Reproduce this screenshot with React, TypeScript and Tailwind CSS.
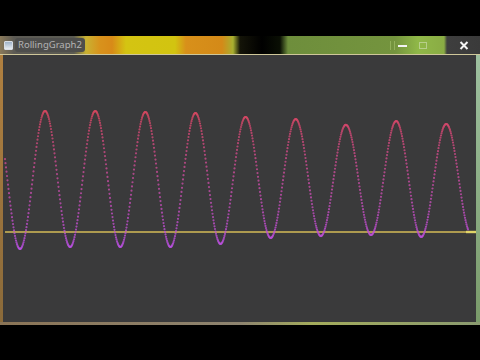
import { useMemo } from "react";

// envelope of the wave, read off the reference (page coordinates)
const tops: [number, number][] = [
  [45, 111], [96, 111], [145, 112], [195, 113], [246, 117],
  [295, 119], [347, 125], [397, 121], [446, 124],
];
const bottoms: [number, number][] = [
  [20, 249], [70, 247], [120, 247], [171, 247], [220, 244],
  [270, 238], [322, 236], [372, 235], [422, 237], [471, 234],
];

const OX = 3;
const OY = 55;

function lerpTable(t: [number, number][], x: number) {
  if (x <= t[0][0]) return t[0][1];
  for (let i = 1; i < t.length; i++) {
    if (x <= t[i][0]) {
      const [x0, y0] = t[i - 1];
      const [x1, y1] = t[i];
      return y0 + ((y1 - y0) * (x - x0)) / (x1 - x0);
    }
  }
  return t[t.length - 1][1];
}

function mix(a: number[], b: number[], k: number) {
  const c = a.map((v, i) => Math.round(v + (b[i] - v) * k));
  return `rgb(${c[0]},${c[1]},${c[2]})`;
}

function Wave() {
  const dots = useMemo(() => {
    const out: { x: number; y: number; c: string }[] = [];
    for (let x = 5; x <= 468; x += 0.5) {
      const top = lerpTable(tops, x);
      const bot = lerpTable(bottoms, x);
      const mid = (top + bot) / 2;
      const amp = (bot - top) / 2;
      const y = mid + amp * Math.cos((2 * Math.PI * (x - 20)) / 50.15);
      const k = Math.min(1, Math.max(0, (y - 111) / 138));
      out.push({ x: x - OX, y: y - OY, c: mix([214, 72, 96], [184, 80, 226], k) });
    }
    return out;
  }, []);

  return (
    <svg width="473" height="267" viewBox="0 0 473 267" className="block">
      <defs>
        <filter id="soft" x="-5%" y="-5%" width="110%" height="110%">
          <feGaussianBlur stdDeviation="0.35" />
        </filter>
      </defs>
      <g filter="url(#soft)">
        <line x1={2} y1={177} x2={466} y2={177} stroke="#ad9a50" strokeWidth={2} />
        <line x1={463} y1={177} x2={473} y2={177} stroke="#e0d466" strokeWidth={2.4} />
        {dots.map((d, i) => (
          <circle key={i} cx={d.x} cy={d.y} r={1.1} fill={d.c} opacity={0.8} />
        ))}
      </g>
    </svg>
  );
}

function TitleBar() {
  return (
    <div className="relative flex h-[19px] items-center border-b border-[#cfc79a] bg-[linear-gradient(90deg,#8a7a5a_0px,#5c5a54_14px,#5a5a52_74px,#c9b232_86px,#d8921c_100px,#d88a18_112px,#d4c412_126px,#d2c410_175px,#d8901a_186px,#d48a18_222px,#a8b030_233px,#141408_240px,#000_262px,#0a0f04_280px,#6e8e3c_288px,#74943e_395px,#90b848_418px,#8aac44_444px,#3e3e3e_447px,#3a3a3a_480px)]">
      <div className="ml-[4px] h-[9px] w-[9px] rounded-[1px] border border-[#d8dde4] bg-[linear-gradient(180deg,#9fb3c8,#e8ecf0)]" />
      <div className="ml-[2px] flex h-[14px] items-center rounded-[3px] bg-[#4e4e4c] px-[3px]">
        <span className="text-[9.5px] leading-none text-[#b4b4b4] [font-family:'Noto_Sans',sans-serif]">
          RollingGraph2
        </span>
      </div>
      <div className="ml-auto flex h-full items-center">
        <div className="mr-[3px] h-[9px] w-px bg-[#a8c470] opacity-60" />
        <div className="mr-[3px] h-[9px] w-px bg-[#a8c470] opacity-60" />
        <div className="mr-[12px] mt-[2px] h-[2px] w-[9px] bg-[#f2f2f2]" />
        <div className="mr-[20px] h-[7px] w-[8px] border border-[#c8d8a8] opacity-70" />
        <div className="flex w-[33px] justify-center">
          <svg width="10" height="9" viewBox="0 0 10 9">
            <path d="M1.5 1 L8.5 8 M8.5 1 L1.5 8" stroke="#f4f4f4" strokeWidth="2" />
          </svg>
        </div>
      </div>
    </div>
  );
}

export default function App() {
  return (
    <div className="flex h-[360px] w-[480px] flex-col overflow-hidden bg-black">
      <div className="h-[36px]" />
      <TitleBar />
      <div className="flex h-[267px]">
        <div className="w-[3px] bg-[linear-gradient(180deg,#b08040,#8a6a3a)]" />
        <div className="flex-1 bg-[#3a3a3b]">
          <Wave />
        </div>
        <div className="w-[4px] bg-[linear-gradient(180deg,#9ec0a0,#7a9a6a)]" />
      </div>
      <div className="h-[3px] bg-[linear-gradient(90deg,#8a7456,#8e8470_50%,#a4ac5c_65%,#8a9a70)]" />
    </div>
  );
}
